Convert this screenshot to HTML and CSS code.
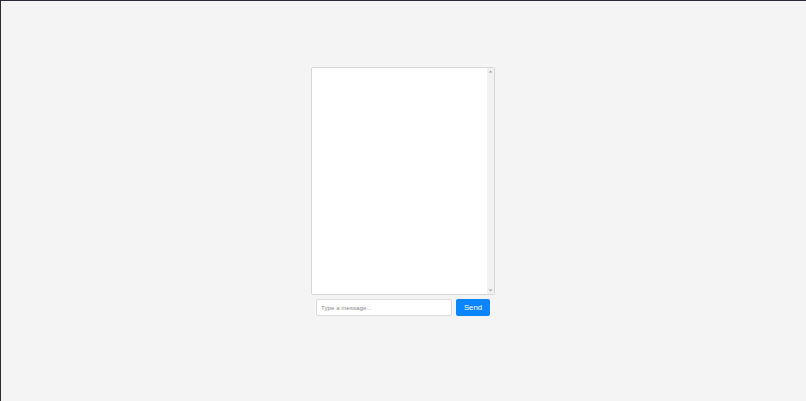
FILE: index.html
```html
<!DOCTYPE html>
<html lang="en">
<head>
<meta charset="utf-8">
<title>Chat</title>
<link rel="stylesheet" href="styles.css">
</head>
<body>
<div class="frame">
  <div class="chat">
    <div class="messages">
      <div class="log"></div>
      <div class="scrollbar">
        <svg class="arrow" width="7" height="7" viewBox="0 0 7 7"><path d="M1.5 4.5 L3.5 2.5 L5.5 4.5 Z" fill="#a8a8a8"/></svg>
        <div class="track"></div>
        <svg class="arrow" width="7" height="7" viewBox="0 0 7 7"><path d="M1.5 2.5 L3.5 4.5 L5.5 2.5 Z" fill="#a8a8a8"/></svg>
      </div>
    </div>
    <form class="composer" onsubmit="return false">
      <input class="field" type="text" placeholder="Type a message...">
      <button class="send" type="submit">Send</button>
    </form>
  </div>
</div>
</body>
</html>
```
FILE: styles.css
```css
html, body {
  margin: 0;
  padding: 0;
  height: 100%;
}
body {
  background: #f4f4f4;
  font-family: "Liberation Sans", Arial, sans-serif;
}
.frame {
  box-sizing: border-box;
  height: 100%;
  box-shadow: inset 1px 1px 0 #2e2838;
  padding-top: 67px;
}
.chat {
  width: 184px;
  margin: 0 auto;
}
.messages {
  box-sizing: border-box;
  height: 228px;
  background: #fff;
  border: 1px solid #d6d6d6;
  border-radius: 2px;
  display: flex;
  overflow: hidden;
}
.log {
  flex: 1;
}
.scrollbar {
  width: 7px;
  background: #f1f1f1;
  display: flex;
  flex-direction: column;
}
.arrow {
  display: block;
  flex: none;
}
.track {
  flex: 1;
}
.composer {
  display: flex;
  align-items: center;
  gap: 4px;
  padding: 4px 5px;
  margin: 0;
}
.field {
  flex: 1;
  min-width: 0;
  box-sizing: border-box;
  height: 17px;
  padding: 0 4px;
  border: 1px solid #dcdcdc;
  border-radius: 2px;
  background: #fff;
  font-family: "Liberation Sans", Arial, sans-serif;
  font-size: 6.2px;
  outline: none;
}
.field::placeholder {
  color: #8a8a8a;
}
.send {
  box-sizing: border-box;
  width: 34px;
  height: 17px;
  padding: 0;
  border: none;
  border-radius: 2px;
  background: #0a84ff;
  color: #fff;
  font-family: "Liberation Sans", Arial, sans-serif;
  font-size: 7.8px;
  cursor: pointer;
}
```
